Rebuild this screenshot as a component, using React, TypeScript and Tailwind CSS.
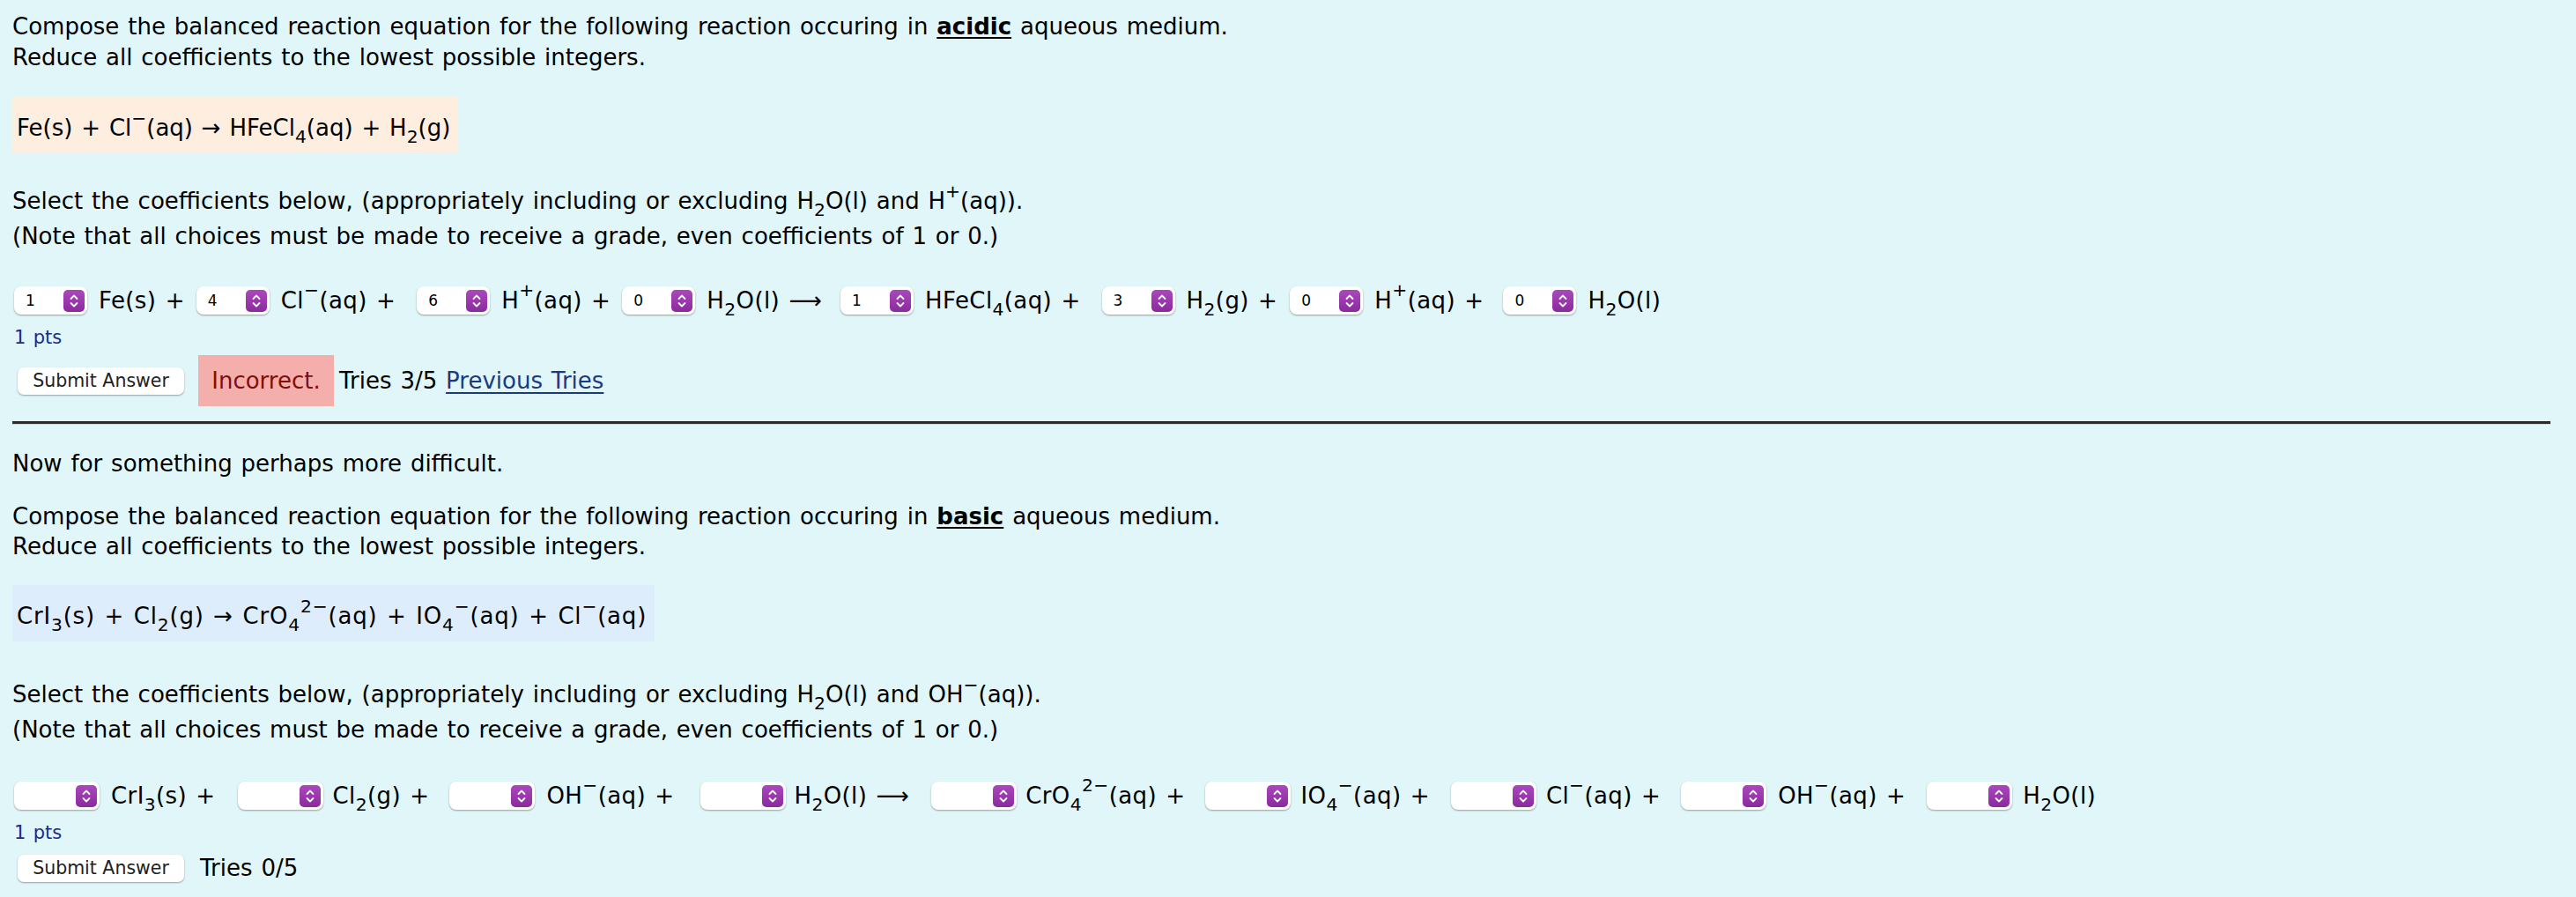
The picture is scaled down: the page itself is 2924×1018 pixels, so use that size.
import React from "react";

type SelProps = { value?: string; wide?: boolean; className?: string };

function Sel({ value = "", wide = false, className = "" }: SelProps) {
    return (
        <span
            className={`inline-flex h-[32px] shrink-0 items-center justify-between rounded-[8px] bg-white pl-[13px] pr-[3px] shadow-[0_1px_2px_rgba(0,0,0,0.35)] tracking-normal ${wide ? "w-[97px]" : "w-[83px]"} ${className}`}
        >
            <span className="text-[17px] leading-none text-black">{value}</span>
            <span className="flex h-[25px] w-[24px] items-center justify-center rounded-[5px] bg-gradient-to-b from-[#ac47bd] to-[#8a2a9d]">
                <svg width="24" height="25" viewBox="0 0 24 25" fill="none" stroke="white" strokeWidth="1.8" strokeLinecap="round" strokeLinejoin="round">
                    <path d="M8.5 10 L12 6.5 L15.5 10" />
                    <path d="M8.5 15 L12 18.5 L15.5 15" />
                </svg>
            </span>
        </span>
    );
}

const Sub = ({ children }: { children: React.ReactNode }) => (
    <sub className="text-[0.78em] bottom-[-0.4em]">{children}</sub>
);

const Sup = ({ children }: { children: React.ReactNode }) => (
    <sup className="text-[0.78em] top-[-0.65em]">{children}</sup>
);

function Btn() {
    return (
        <button className="ml-[6px] flex h-[31px] w-[189px] shrink-0 items-center justify-center rounded-[7px] bg-white text-[20.5px] text-[#222] shadow-[0_1px_2px_rgba(0,0,0,0.35)] [word-spacing:0px]">
            Submit Answer
        </button>
    );
}

export default function App() {
    return (
        <div className="min-h-[1018px] w-full bg-[#e1f6f8] pl-[14px] pr-[29px] pt-[13px] font-['DejaVu_Sans',Verdana,sans-serif] text-[26px] text-black [word-spacing:1.6px]">
            {/* Part 1: acidic */}
            <p className="leading-[35px]">
                Compose the balanced reaction equation for the following reaction occuring in{" "}
                <b className="font-bold underline decoration-[2px] underline-offset-[3px]">acidic</b> aqueous medium.
                <br />
                Reduce all coefficients to the lowest possible integers.
            </p>

            <div className="mt-[26px] inline-block bg-[#fdeedf] pb-[10px] pl-[5px] pr-[9px] pt-[19px] leading-[35px]">
                Fe(s) + Cl<Sup>−</Sup>(aq) → HFeCl<Sub>4</Sub>(aq) + H<Sub>2</Sub>(g)
            </div>

            <p className="mt-[35px] leading-[40px]">
                Select the coefficients below, (appropriately including or excluding H<Sub>2</Sub>O(l) and H<Sup>+</Sup>(aq)).
                <br />
                (Note that all choices must be made to receive a grade, even coefficients of 1 or 0.)
            </p>

            <div className="mt-[37px] flex h-[32px] items-center whitespace-nowrap leading-[35px] tracking-[0.4px]">
                <Sel value="1" className="ml-[2px]" />
                <span className="ml-[13px]">Fe(s) +</span>
                <Sel value="4" className="ml-[13px]" />
                <span className="ml-[13px]">Cl<Sup>−</Sup>(aq) +</span>
                <Sel value="6" className="ml-[24px]" />
                <span className="ml-[13px]">H<Sup>+</Sup>(aq) +</span>
                <Sel value="0" className="ml-[13px]" />
                <span className="ml-[13px]">H<Sub>2</Sub>O(l) ⟶</span>
                <Sel value="1" className="ml-[21px]" />
                <span className="ml-[13px]">HFeCl<Sub>4</Sub>(aq) +</span>
                <Sel value="3" className="ml-[24px]" />
                <span className="ml-[13px]">H<Sub>2</Sub>(g) +</span>
                <Sel value="0" className="ml-[14px]" />
                <span className="ml-[13px]">H<Sup>+</Sup>(aq) +</span>
                <Sel value="0" className="ml-[22px]" />
                <span className="ml-[13px]">H<Sub>2</Sub>O(l)</span>
            </div>

            <div className="mt-[12px] pl-[2px] text-[21px] leading-[28px] text-[#1a2b8c]">1 pts</div>

            <div className="mt-[6px] flex h-[58px] items-center">
                <Btn />
                <span className="ml-[16px] flex h-[58px] w-[154px] items-center justify-center bg-[#f4aeab] text-[#7d0f0f]">
                    Incorrect.
                </span>
                <span className="ml-[6px]">
                    Tries 3/5{" "}
                    <a href="#" className="text-[#1b3a80] underline decoration-[2px] underline-offset-[4px]">
                        Previous Tries
                    </a>
                </span>
            </div>

            <div className="mt-[17px] h-[4px] border-b border-t-[3px] border-b-[#cfd8d9] border-t-[#2b2b2b]" />

            {/* Part 2: basic */}
            <p className="mt-[27px] leading-[35px]">Now for something perhaps more difficult.</p>

            <p className="mt-[25px] leading-[34px]">
                Compose the balanced reaction equation for the following reaction occuring in{" "}
                <b className="font-bold underline decoration-[2px] underline-offset-[3px]">basic</b> aqueous medium.
                <br />
                Reduce all coefficients to the lowest possible integers.
            </p>

            <div className="mt-[27px] inline-block bg-[#deedfb] pb-[11px] pl-[5px] pr-[9px] pt-[18px] leading-[35px] tracking-[0.8px]">
                CrI<Sub>3</Sub>(s) + Cl<Sub>2</Sub>(g) → CrO<Sub>4</Sub>
                <Sup>2−</Sup>(aq) + IO<Sub>4</Sub>
                <Sup>−</Sup>(aq) + Cl<Sup>−</Sup>(aq)
            </div>

            <p className="mt-[40px] leading-[40px]">
                Select the coefficients below, (appropriately including or excluding H<Sub>2</Sub>O(l) and OH<Sup>−</Sup>(aq)).
                <br />
                (Note that all choices must be made to receive a grade, even coefficients of 1 or 0.)
            </p>

            <div className="mt-[39px] flex h-[32px] items-center whitespace-nowrap leading-[35px] tracking-[0.4px]">
                <Sel wide className="ml-[2px]" />
                <span className="ml-[13px]">CrI<Sub>3</Sub>(s) +</span>
                <Sel wide className="ml-[25px]" />
                <span className="ml-[11px]">Cl<Sub>2</Sub>(g) +</span>
                <Sel wide className="ml-[23px]" />
                <span className="ml-[13px]">OH<Sup>−</Sup>(aq) +</span>
                <Sel wide className="ml-[30px]" />
                <span className="ml-[9px]">H<Sub>2</Sub>O(l) ⟶</span>
                <Sel wide className="ml-[25px]" />
                <span className="ml-[10px]">
                    CrO<Sub>4</Sub>
                    <Sup>2−</Sup>(aq) +
                </span>
                <Sel wide className="ml-[23px]" />
                <span className="ml-[11px]">
                    IO<Sub>4</Sub>
                    <Sup>−</Sup>(aq) +
                </span>
                <Sel wide className="ml-[24px]" />
                <span className="ml-[11px]">Cl<Sup>−</Sup>(aq) +</span>
                <Sel wide className="ml-[23px]" />
                <span className="ml-[13px]">OH<Sup>−</Sup>(aq) +</span>
                <Sel wide className="ml-[24px]" />
                <span className="ml-[12px]">H<Sub>2</Sub>O(l)</span>
            </div>

            <div className="mt-[12px] pl-[2px] text-[21px] leading-[28px] text-[#1a2b8c]">1 pts</div>

            <div className="mt-[10px] flex h-[32px] items-center">
                <Btn />
                <span className="ml-[18px]">Tries 0/5</span>
            </div>
        </div>
    );
}
